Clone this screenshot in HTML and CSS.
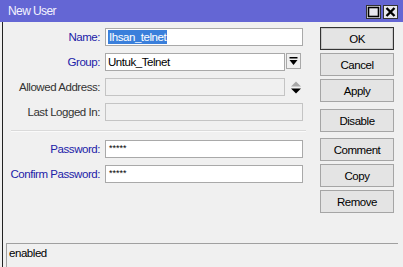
FILE: index.html
```html
<!DOCTYPE html>
<html>
<head>
<meta charset="utf-8">
<link rel="stylesheet" href="styles.css">
</head>
<body>
<div class="titlebar">
  <span class="title">New User</span>
  <div class="tbtns">
    <span class="tbtn"><svg width="13" height="12" viewBox="0 0 13 12"><rect x="1.5" y="1.5" width="10" height="9" fill="none" stroke="#000" stroke-width="1.6"/></svg></span>
    <span class="tbtn"><svg width="13" height="12" viewBox="0 0 13 12"><path d="M2.5 2 L10.5 10 M10.5 2 L2.5 10" stroke="#000" stroke-width="2.4"/></svg></span>
  </div>
</div>
<div class="window">
  <div class="main">
    <div class="form">
      <div class="row">
        <label class="lbl blue">Name:</label>
        <div class="field"><div class="input"><span class="sel">Ihsan_telnet</span></div></div>
      </div>
      <div class="row">
        <label class="lbl blue">Group:</label>
        <div class="field">
          <div class="input short">Untuk_Telnet</div>
          <span class="ddbtn"><svg width="9" height="9" viewBox="0 0 9 9"><rect x="0.5" y="0" width="8" height="1.5" fill="#000"/><path d="M0.5 3 H8.5 L4.5 8 Z" fill="#000"/></svg></span>
        </div>
      </div>
      <div class="row">
        <label class="lbl">Allowed Address:</label>
        <div class="field">
          <div class="input short disabled"></div>
          <span class="updown"><svg width="12" height="13" viewBox="0 0 12 13"><path d="M1 5.5 H11 L6 0.5 Z" fill="#a8a8a8"/><path d="M1 7.5 H11 L6 12.5 Z" fill="#000"/></svg></span>
        </div>
      </div>
      <div class="row">
        <label class="lbl">Last Logged In:</label>
        <div class="field"><div class="input disabled"></div></div>
      </div>
      <div class="divider"></div>
      <div class="row">
        <label class="lbl blue">Password:</label>
        <div class="field"><div class="input pw">*****</div></div>
      </div>
      <div class="row">
        <label class="lbl blue">Confirm Password:</label>
        <div class="field"><div class="input pw">*****</div></div>
      </div>
    </div>
    <div class="buttons">
      <button class="btn default">OK</button>
      <button class="btn">Cancel</button>
      <button class="btn">Apply</button>
      <button class="btn gap">Disable</button>
      <button class="btn gap2">Comment</button>
      <button class="btn">Copy</button>
      <button class="btn">Remove</button>
    </div>
  </div>
  <div class="status">enabled</div>
</div>
</body>
</html>
```
FILE: styles.css
```css
html, body {
  margin: 0;
  padding: 0;
  width: 403px;
  height: 267px;
  overflow: hidden;
  background: #f0f0f0;
  font-family: "Liberation Sans", Arial, sans-serif;
  font-size: 11.5px;
  letter-spacing: -0.45px;
  color: #000;
}
.titlebar {
  height: 22px;
  background: #6466d4;
  display: flex;
  align-items: center;
  justify-content: space-between;
  padding-left: 8px;
  padding-right: 5px;
  box-sizing: border-box;
}
.title {
  color: #f4f4ff;
  font-size: 12px;
  letter-spacing: -0.6px;
}
.tbtns {
  display: flex;
  gap: 2px;
  margin-top: 2px;
}
.tbtn {
  width: 13px;
  height: 12px;
  background: #e8e8ee;
  border: 1px solid #333;
  display: flex;
  align-items: center;
  justify-content: center;
}
.window {
  margin-left: 2px;
  border-left: 1px solid #222;
  height: 245px;
  display: flex;
  flex-direction: column;
}
.main {
  display: flex;
  height: 221px;
}
.form {
  width: 300px;
  padding-top: 6px;
  display: flex;
  flex-direction: column;
  gap: 7px;
}
.row {
  display: flex;
  align-items: center;
  height: 18px;
}
.lbl {
  width: 97px;
  text-align: right;
  color: #333;
  padding-right: 5px;
  box-sizing: content-box;
  white-space: nowrap;
}
.lbl.blue {
  color: #2121a8;
}
.field {
  width: 198px;
  height: 18px;
  display: flex;
  align-items: flex-start;
}
.input {
  flex: 1;
  height: 18px;
  box-sizing: border-box;
  border: 1px solid #a9a9a9;
  background: #fff;
  padding-left: 2px;
  line-height: 16px;
  white-space: nowrap;
}
.input.short {
  flex: none;
  width: 180px;
}
.input.disabled {
  background: #f0f0f0;
  border-color: #c4c4c4;
}
.input.pw {
  font-size: 9px;
  letter-spacing: 0;
  line-height: 14px;
  padding-left: 3px;
}
.sel {
  background: #3a7fdb;
  color: #fff;
  display: inline-block;
  line-height: 14px;
  padding: 0 1px;
}
.ddbtn {
  width: 15px;
  height: 16px;
  margin-left: 1px;
  box-sizing: border-box;
  border: 1px solid #a9a9a9;
  background: #f0f0f0;
  display: flex;
  align-items: center;
  justify-content: center;
}
.updown {
  margin-left: 5px;
  margin-top: 3px;
  display: flex;
}
.divider {
  margin: 2px 0 1px 8px;
  width: 295px;
  height: 1px;
  background: #dadada;
  border-bottom: 1px solid #fafafa;
}
.buttons {
  margin-left: 17px;
  padding-top: 5px;
  display: flex;
  flex-direction: column;
  gap: 3px;
}
.btn {
  width: 74px;
  height: 23px;
  background: #e4e4e4;
  border: 1px solid #a5a5a5;
  font-family: "Liberation Sans", Arial, sans-serif;
  font-size: 11.5px;
  letter-spacing: -0.45px;
  color: #000;
  padding: 0;
}
.btn.default {
  border: 1px solid #333;
  box-shadow: inset 0 0 0 1px #c8c8c8;
}
.btn.gap {
  margin-top: 4px;
}
.btn.gap2 {
  margin-top: 3px;
}
.status {
  margin-left: 3px;
  margin-right: 5px;
  margin-top: 22px;
  height: 26px;
  border-top: 1px solid #a0a0a0;
  border-left: 1px solid #a0a0a0;
  padding: 3px 0 0 2px;
  box-sizing: border-box;
}
```
